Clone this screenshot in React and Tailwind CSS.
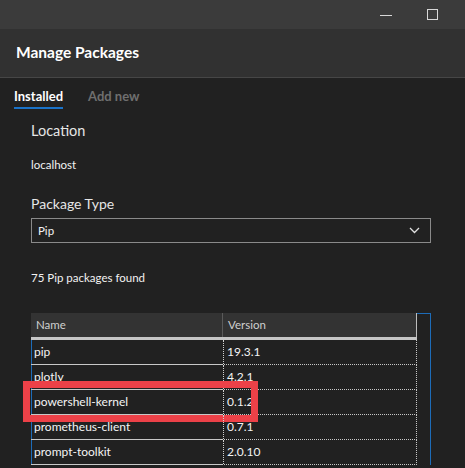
const PACKAGES = [
  { name: "pip", version: "19.3.1" },
  { name: "plotly", version: "4.2.1" },
  { name: "powershell-kernel", version: "0.1.2", marked: true },
  { name: "prometheus-client", version: "0.7.1" },
  { name: "prompt-toolkit", version: "2.0.10" },
];

const App = () => {
  return (
    <div
      className="w-[465px] h-[468px] overflow-hidden bg-[#212121] text-[#e8e8e8]"
      style={{ fontFamily: 'Lato, "Noto Sans", sans-serif' }}
    >
      {/* window chrome */}
      <div className="h-[29px] bg-[#3b3b3b] flex items-center justify-end">
        <div className="w-[12px] h-px bg-[#d8d8d8] mr-[35px] mt-[1px]" />
        <div className="w-[11px] h-[11px] border border-[#d8d8d8] mr-[27px]" />
      </div>

      <div className="h-[49px] bg-[#313131] border-b border-[#464646] flex items-center px-[16px]">
        <span className="text-[15.5px] font-bold text-white">Manage Packages</span>
      </div>

      {/* tabs */}
      <div className="flex gap-[25px] px-[14px] pt-[9px]">
        <div className="flex flex-col">
          <span className="text-[13px] leading-[18px] font-bold text-white">
            Installed
          </span>
          <div className="h-[2px] bg-[#1b73c9] mt-[2px]" />
        </div>
        <span className="text-[13px] leading-[18px] font-bold text-[#6f6f6f]">
          Add new
        </span>
      </div>

      <div className="pl-[31px] pr-[34px]">
        <div className="mt-[12px] text-[14.5px] leading-[20px] text-[#e6e6e6]">
          Location
        </div>
        <div className="mt-[16px] text-[11.5px] leading-[16px] text-[#f2f2f2]">localhost</div>
        <div className="mt-[21px] text-[14px] leading-[20px] text-[#e6e6e6]">
          Package Type
        </div>
        <div className="mt-[4px] h-[25px] border border-[#8a8a8a] flex items-center justify-between pl-[6px] pr-[10px]">
          <span className="text-[11.5px] text-[#f2f2f2]">Pip</span>
          <svg width="11" height="7" viewBox="0 0 11 7">
            <path d="M1 1l4.5 4.5L10 1" fill="none" stroke="#e0e0e0" strokeWidth="1.3" />
          </svg>
        </div>
        <div className="mt-[27px] text-[11.5px] leading-[16px] text-[#f2f2f2]">
          75 Pip packages found
        </div>

        {/* package table */}
        <div className="mt-[27px] w-[400px] border border-b-0 border-[#1d6cb8]">
          <div className="w-[386px] -mt-px -ml-px">
            <div className="flex h-[24px] bg-[#333333] border-r border-[#bdbdbd] text-[11.5px] text-[#cfcfcf]">
              <div className="w-[192px] flex items-center pl-[5px] border-r border-[#5a5a5a]">
                Name
              </div>
              <div className="flex-1 flex items-center pl-[5px]">Version</div>
            </div>
            <div className="h-[3px] bg-[#c6c6c6]" />
            {PACKAGES.map((pkg) => (
              <div
                key={pkg.name}
                className="relative flex h-[25px] border-b border-r border-dotted border-[#c8c8c8] text-[12px] text-[#f4f4f4]"
              >
                <div className="w-[192px] flex items-center pl-[3px] border-b border-[#c8c8c8] -mb-px">
                  {pkg.name}
                </div>
                <div className="flex-1 flex items-center pl-[3px] border-l border-dotted border-[#d0d0d0]">
                  {pkg.version}
                </div>
                {pkg.marked && (
                  <div className="absolute left-[-8px] top-[-9px] w-[235px] h-[41px] border-[7px] border-[#ec4148]" />
                )}
              </div>
            ))}
          </div>
        </div>
      </div>
    </div>
  );
};

export default App;
